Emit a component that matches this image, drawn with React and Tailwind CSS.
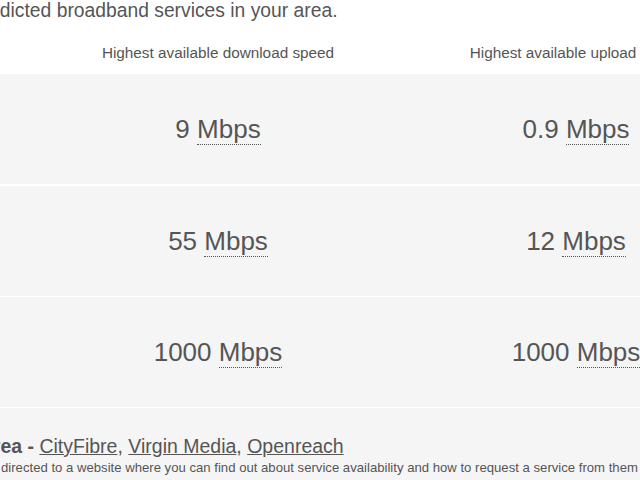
const speeds = [
    { down: '9', up: '0.9' },
    { down: '55', up: '12' },
    { down: '1000', up: '1000' },
];

function Speed({ value }) {
    return (
        <span className="text-[26px] leading-[30px]">
            {value}{' '}
            <span className="border-b border-dotted border-[#555]" title="Megabits per second">Mbps</span>
        </span>
    );
}

export default function App() {
    return (
        <div className="w-[640px] h-[480px] overflow-hidden bg-[#f5f5f5] text-[#555] font-['Liberation_Sans',Arial,sans-serif]">
            {/* Intro + column headers */}
            <div className="bg-white h-[74px]">
                <p className="text-[19.3px] leading-[22px] whitespace-nowrap -ml-[28px]">
                    predicted broadband services in your area.
                </p>
                <div className="flex ml-[39px] mt-[22px] text-[15.3px] leading-[18px] whitespace-nowrap">
                    <div className="w-[358px] shrink-0 text-center">Highest available download speed</div>
                    <div className="w-[358px] shrink-0 text-center">Highest available upload speed</div>
                </div>
            </div>

            {/* Speed rows */}
            {speeds.map((row, i) => (
                <div
                    key={i}
                    className={
                        i === 0
                            ? 'h-[110px] flex items-center'
                            : i === 1
                                ? 'h-[112px] flex items-center border-t-2 border-white'
                                : 'h-[111px] flex items-center border-t border-white'
                    }
                >
                    <div className="flex ml-[39px] whitespace-nowrap">
                        <div className="w-[358px] shrink-0 text-center"><Speed value={row.down} /></div>
                        <div className="w-[358px] shrink-0 text-center"><Speed value={row.up} /></div>
                    </div>
                </div>
            ))}

            {/* Providers */}
            <div className="border-t border-white pt-[27px] whitespace-nowrap">
                <p className="text-[19.5px] leading-[22px] -ml-[18px]">
                    <span className="font-bold">area - </span>
                    <a href="#" className="underline">CityFibre</a>,{' '}
                    <a href="#" className="underline">Virgin Media</a>,{' '}
                    <a href="#" className="underline">Openreach</a>
                </p>
                <p className="text-[13.15px] leading-[16px] mt-[3px] ml-[1px]">
                    directed to a website where you can find out about service availability and how to request a service from them
                </p>
            </div>
        </div>
    );
}
